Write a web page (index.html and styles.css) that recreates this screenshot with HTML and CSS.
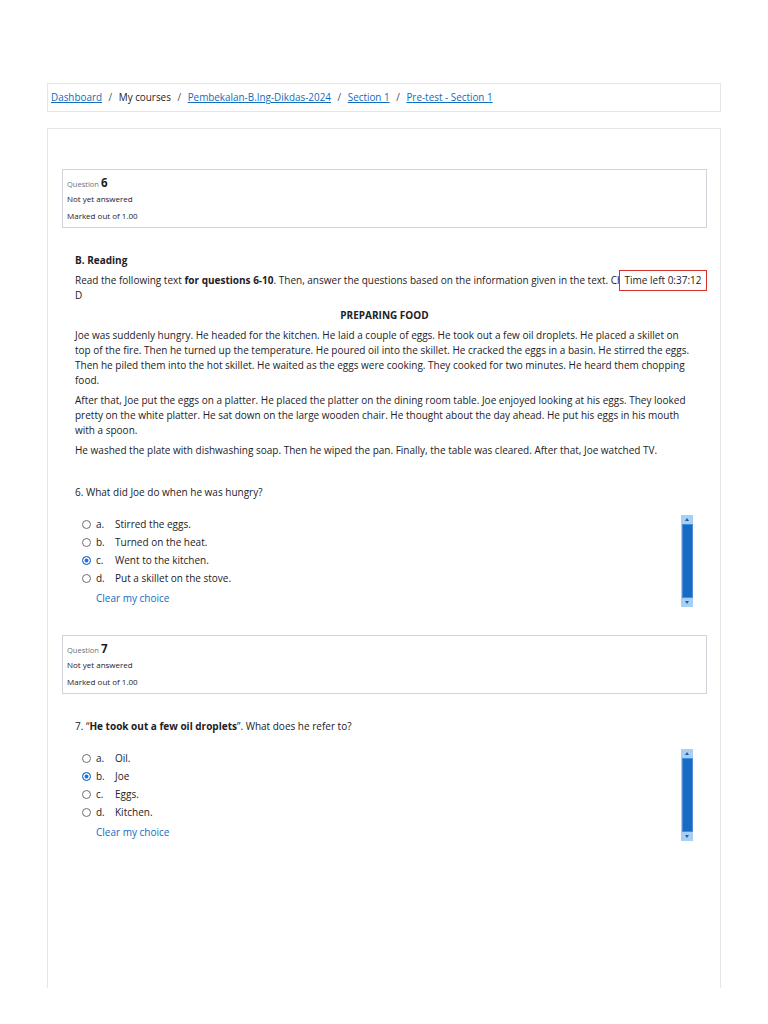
FILE: index.html
```html
<!DOCTYPE html>
<html lang="en">
<head>
  <meta charset="UTF-8">
  <meta name="viewport" content="width=device-width, initial-scale=1.0">
  <title>Pre-test - Section 1</title>
  <link rel="stylesheet" href="styles.css">
</head>
<body>

<nav class="breadcrumb" aria-label="Navigation bar">
  <a href="#">Dashboard</a>
  <span class="sep">/</span>
  <span>My courses</span>
  <span class="sep">/</span>
  <a href="#">Pembekalan-B.Ing-Dikdas-2024</a>
  <span class="sep">/</span>
  <a href="#">Section 1</a>
  <span class="sep">/</span>
  <a href="#">Pre-test - Section 1</a>
</nav>

<main class="card">
  <div class="timer">Time left 0:37:12</div>

  <div class="que">
    <div class="info">
      <div class="qno"><span class="qlabel">Question</span> <b>6</b></div>
      <div class="state">Not yet answered</div>
      <div class="grade">Marked out of 1.00</div>
    </div>
    <div class="formulation">
      <p><b>B. Reading</b></p>
      <p>Read the following text <b>for questions 6-10</b>. Then, answer the questions based on the information given in the text. Choose A, B, C or D</p>
      <p class="title"><b>PREPARING FOOD</b></p>
      <p>Joe was suddenly hungry. He headed for the kitchen. He laid a couple of eggs. He took out a few oil droplets. He placed a skillet on top of the fire. Then he turned up the temperature. He poured oil into the skillet. He cracked the eggs in a basin. He stirred the eggs. Then he piled them into the hot skillet. He waited as the eggs were cooking. They cooked for two minutes. He heard them chopping food.</p>
      <p>After that, Joe put the eggs on a platter. He placed the platter on the dining room table. Joe enjoyed looking at his eggs. They looked pretty on the white platter. He sat down on the large wooden chair. He thought about the day ahead. He put his eggs in his mouth with a spoon.</p>
      <p>He washed the plate with dishwashing soap. Then he wiped the pan. Finally, the table was cleared. After that, Joe watched TV.</p>
      <p class="qtext">6. What did Joe do when he was hungry?</p>
      <div class="answer">
        <div class="options">
          <label class="opt"><input type="radio" name="q6"><span class="num">a.</span>Stirred the eggs.</label>
          <label class="opt"><input type="radio" name="q6"><span class="num">b.</span>Turned on the heat.</label>
          <label class="opt"><input type="radio" name="q6" checked><span class="num">c.</span>Went to the kitchen.</label>
          <label class="opt"><input type="radio" name="q6"><span class="num">d.</span>Put a skillet on the stove.</label>
          <a href="#" class="clear">Clear my choice</a>
        </div>
        <div class="scrollbar">
          <span class="arrow up"></span>
          <span class="thumb"></span>
          <span class="arrow down"></span>
        </div>
      </div>
    </div>
  </div>

  <div class="que">
    <div class="info">
      <div class="qno"><span class="qlabel">Question</span> <b>7</b></div>
      <div class="state">Not yet answered</div>
      <div class="grade">Marked out of 1.00</div>
    </div>
    <div class="formulation">
      <p class="qtext">7. &ldquo;<b>He took out a few oil droplets</b>&rdquo;. What does he refer to?</p>
      <div class="answer">
        <div class="options">
          <label class="opt"><input type="radio" name="q7"><span class="num">a.</span>Oil.</label>
          <label class="opt"><input type="radio" name="q7" checked><span class="num">b.</span>Joe</label>
          <label class="opt"><input type="radio" name="q7"><span class="num">c.</span>Eggs.</label>
          <label class="opt"><input type="radio" name="q7"><span class="num">d.</span>Kitchen.</label>
          <a href="#" class="clear">Clear my choice</a>
        </div>
        <div class="scrollbar">
          <span class="arrow up"></span>
          <span class="thumb"></span>
          <span class="arrow down"></span>
        </div>
      </div>
    </div>
  </div>
</main>

</body>
</html>
```

FILE: styles.css
```css
body {
  font-family: "Open Sans", "Noto Sans", sans-serif;
  font-size: 10px;
  color: #1d2125;
  background-color: #fff;
  margin: 0;
  padding: 83px 47px 0 47px;
}
a {
  color: #0f6cbf;
}
.breadcrumb {
  border: 1px solid #e4e6e8;
  padding: 7px 3px;
  line-height: 13px;
  font-size: 9.9px;
}
.breadcrumb .sep {
  color: #4a4f54;
  margin: 0 4px;
}
.card {
  position: relative;
  margin-top: 16px;
  border: 1px solid #e4e6e8;
  border-bottom: none;
  padding: 40px 13px 0 14px;
  min-height: 819px;
}
.timer {
  position: absolute;
  top: 141px;
  right: 13px;
  width: 86px;
  height: 19px;
  line-height: 19px;
  text-align: center;
  background: #fff;
  border: 1px solid #d9302c;
}
.que {
  margin-bottom: 28px;
}
.info {
  border: 1px solid #cfd4da;
  padding: 4px 4px 5px 4px;
  font-size: 8px;
}
.qno {
  line-height: 18px;
}
.qlabel {
  font-size: 7.5px;
  color: #6a737b;
}
.qno b {
  font-size: 11.5px;
}
.state {
  line-height: 12px;
}
.grade {
  line-height: 12px;
  margin-top: 5px;
}
.formulation {
  margin-top: 25px;
  padding: 0 13px 0 13px;
}
.formulation p {
  margin: 0 0 5px 0;
  line-height: 15px;
}
.title {
  text-align: center;
}
.formulation p.qtext {
  margin-top: 27px;
  margin-bottom: 15px;
}
.formulation p.qtext:first-child {
  margin-top: 0;
}
.answer {
  display: flex;
  justify-content: space-between;
  margin-right: 1px;
}
.options {
  display: flex;
  flex-direction: column;
  padding-left: 7px;
}
.opt {
  display: flex;
  align-items: center;
  height: 18px;
}
.opt input {
  appearance: none;
  width: 9px;
  height: 9px;
  margin: 0 5px 0 0;
  border: 1px solid #6f6f6f;
  border-radius: 50%;
  background: #fff;
}
.opt input:checked {
  border-color: #1f6fd0;
  background: #1f74d8;
  box-shadow: inset 0 0 0 1.5px #fff;
}
.num {
  display: inline-block;
  width: 19px;
}
.clear {
  display: block;
  margin: 2px 0 0 14px;
  line-height: 18px;
  text-decoration: none;
}
.scrollbar {
  width: 12px;
  background: #a7cff5;
  display: flex;
  flex-direction: column;
  align-items: center;
}
.arrow {
  width: 0;
  height: 0;
  border-left: 2.5px solid transparent;
  border-right: 2.5px solid transparent;
}
.arrow.up {
  margin: 3px 0 3px 0;
  border-bottom: 3px solid #1c5fa6;
}
.arrow.down {
  margin: 3px 0 3px 0;
  border-top: 3px solid #1c5fa6;
}
.thumb {
  flex: 1;
  width: 9px;
  background: #176bc4;
  border: 0.5px solid #4a8fd6;
}
```
